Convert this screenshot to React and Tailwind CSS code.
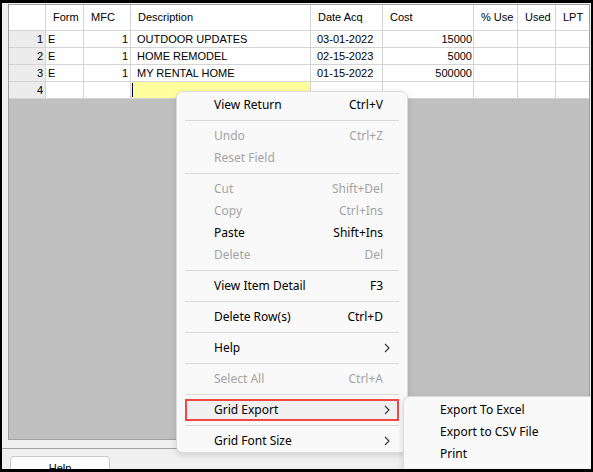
import React from "react";

const cols = [
  { w: 37 },
  { w: 38, label: "Form" },
  { w: 47, label: "MFC" },
  { w: 180, label: "Description" },
  { w: 72, label: "Date Acq" },
  { w: 91, label: "Cost" },
  { w: 44, label: "% Use" },
  { w: 38, label: "Used" },
  { w: 33, label: "LPT" },
];

const rows = [
  ["1", "E", "1", "OUTDOOR UPDATES", "03-01-2022", "15000"],
  ["2", "E", "1", "HOME REMODEL", "02-15-2023", "5000"],
  ["3", "E", "1", "MY RENTAL HOME", "01-15-2022", "500000"],
];

function Chevron() {
  return (
    <svg width="6" height="10" viewBox="0 0 6 10" className="shrink-0">
      <path d="M1 1 L5 5 L1 9" fill="none" stroke="#333" strokeWidth="1.1" />
    </svg>
  );
}

function Item({ label, shortcut, disabled, sub, highlight }) {
  return (
    <div
      className={
        "mx-[8px] h-[22px] flex items-center justify-between " +
        (highlight
          ? "border-2 border-[#f04646] bg-[#f0f0f0] pl-[27px] pr-[7px] h-[22px]"
          : "pl-[29px] " + (sub ? "pr-[9px]" : "pr-[16px]"))
      }
    >
      <span className={disabled ? "text-[#a3a3a3]" : "text-black"}>{label}</span>
      {sub ? (
        <Chevron />
      ) : (
        <span className={disabled ? "text-[#a3a3a3]" : "text-black"}>{shortcut}</span>
      )}
    </div>
  );
}

function Sep() {
  return (
    <div className="mx-[8px] h-[9px] flex items-center">
      <div className="w-full h-px bg-[#d9d9d9]" />
    </div>
  );
}

export default function App() {
  return (
    <div className="w-[593px] h-[472px] box-border border-l-2 border-r-2 border-t-[3px] border-b-[3px] border-black bg-black">
      <div className="relative w-full h-full bg-[#f0f0f0] overflow-hidden" style={{ fontFamily: '"Liberation Sans", Arial, sans-serif' }}>
        {/* Grid */}
        <div className="ml-[6px] mt-[1px] w-[582px] h-[436px] border border-[#a0a0a0] bg-[#c0c0c0] flex flex-col text-[11px] text-black">
          {/* header */}
          <div className="flex h-[26px] bg-white shrink-0">
            {cols.map((c, i) => (
              <div
                key={i}
                className="h-full border-r border-b border-[#d4d4d4] flex items-center pl-[7px] last:border-r-0"
                style={{ width: c.w }}
              >
                {c.label}
              </div>
            ))}
          </div>
          {rows.map((r) => (
            <div key={r[0]} className="flex h-[17px] shrink-0">
              <div className="w-[37px] h-full bg-[#ececec] border-r border-b border-[#d4d4d4] flex items-center justify-end pr-[2px]">{r[0]}</div>
              <div className="w-[38px] h-full bg-white border-r border-b border-[#d4d4d4] flex items-center pl-[2px]">{r[1]}</div>
              <div className="w-[47px] h-full bg-white border-r border-b border-[#d4d4d4] flex items-center justify-end pr-[2px]">{r[2]}</div>
              <div className="w-[180px] h-full bg-white border-r border-b border-[#d4d4d4] flex items-center pl-[6px]">{r[3]}</div>
              <div className="w-[72px] h-full bg-white border-r border-b border-[#d4d4d4] flex items-center pl-[6px]">{r[4]}</div>
              <div className="w-[91px] h-full bg-white border-r border-b border-[#d4d4d4] flex items-center justify-end pr-[1px]">{r[5]}</div>
              <div className="w-[44px] h-full bg-white border-r border-b border-[#d4d4d4]" />
              <div className="w-[38px] h-full bg-white border-r border-b border-[#d4d4d4]" />
              <div className="w-[33px] h-full bg-white border-b border-[#d4d4d4]" />
            </div>
          ))}
          <div className="flex h-[17px] shrink-0">
            <div className="w-[37px] h-full bg-[#ececec] border-r border-b border-[#d4d4d4] flex items-center justify-end pr-[2px]">4</div>
            <div className="w-[38px] h-full bg-white border-r border-b border-[#d4d4d4]" />
            <div className="w-[47px] h-full bg-white border-r border-b border-[#d4d4d4]" />
            <div className="w-[180px] h-full bg-[#ffff9e] border-r border-b border-[#d4d4d4] flex items-center pl-[1px]">
              <div className="w-[1px] h-[14px] bg-[#000040]" />
            </div>
            <div className="w-[72px] h-full bg-white border-r border-b border-[#d4d4d4]" />
            <div className="w-[91px] h-full bg-white border-r border-b border-[#d4d4d4]" />
            <div className="w-[44px] h-full bg-white border-r border-b border-[#d4d4d4]" />
            <div className="w-[38px] h-full bg-white border-r border-b border-[#d4d4d4]" />
            <div className="w-[33px] h-full bg-white border-b border-[#d4d4d4]" />
          </div>
        </div>

        {/* bottom strip */}
        <div className="mt-[8px] border-t border-[#a0a0a0] h-[8px]" />
        <div className="ml-[8px] w-[100px] h-[20px] bg-[#fdfdfd] border border-[#c8c8c8] rounded-t-[4px] flex justify-center pt-[3px] text-[11px]">
          Help
        </div>

        {/* Context menu */}
        <div
          className="absolute left-[174px] top-[88px] w-[232px] h-[362px] bg-[#f9f9f9] border border-[#dcdcdc] rounded-[7px] shadow-[0_2px_6px_rgba(0,0,0,0.15)] pt-[2px] text-[12px]"
          style={{ fontFamily: '"Noto Sans", "Open Sans", sans-serif' }}
        >
          <Item label="View Return" shortcut="Ctrl+V" />
          <Sep />
          <Item label="Undo" shortcut="Ctrl+Z" disabled />
          <Item label="Reset Field" shortcut="" disabled />
          <Sep />
          <Item label="Cut" shortcut="Shift+Del" disabled />
          <Item label="Copy" shortcut="Ctrl+Ins" disabled />
          <Item label="Paste" shortcut="Shift+Ins" />
          <Item label="Delete" shortcut="Del" disabled />
          <Sep />
          <Item label="View Item Detail" shortcut="F3" />
          <Sep />
          <Item label="Delete Row(s)" shortcut="Ctrl+D" />
          <Sep />
          <Item label="Help" sub />
          <Sep />
          <Item label="Select All" shortcut="Ctrl+A" disabled />
          <Sep />
          <Item label="Grid Export" sub highlight />
          <Sep />
          <Item label="Grid Font Size" sub />
        </div>

        {/* Submenu */}
        <div
          className="absolute left-[401px] top-[393px] w-[200px] h-[90px] bg-[#f9f9f9] border border-[#dcdcdc] rounded-[7px] shadow-[0_2px_6px_rgba(0,0,0,0.15)] pt-[2px] text-[12px]"
          style={{ fontFamily: '"Noto Sans", "Open Sans", sans-serif' }}
        >
          <div className="h-[22px] flex items-center pl-[36px]">Export To Excel</div>
          <div className="h-[22px] flex items-center pl-[36px]">Export to CSV File</div>
          <div className="h-[22px] flex items-center pl-[36px]">Print</div>
        </div>
      </div>
    </div>
  );
}
